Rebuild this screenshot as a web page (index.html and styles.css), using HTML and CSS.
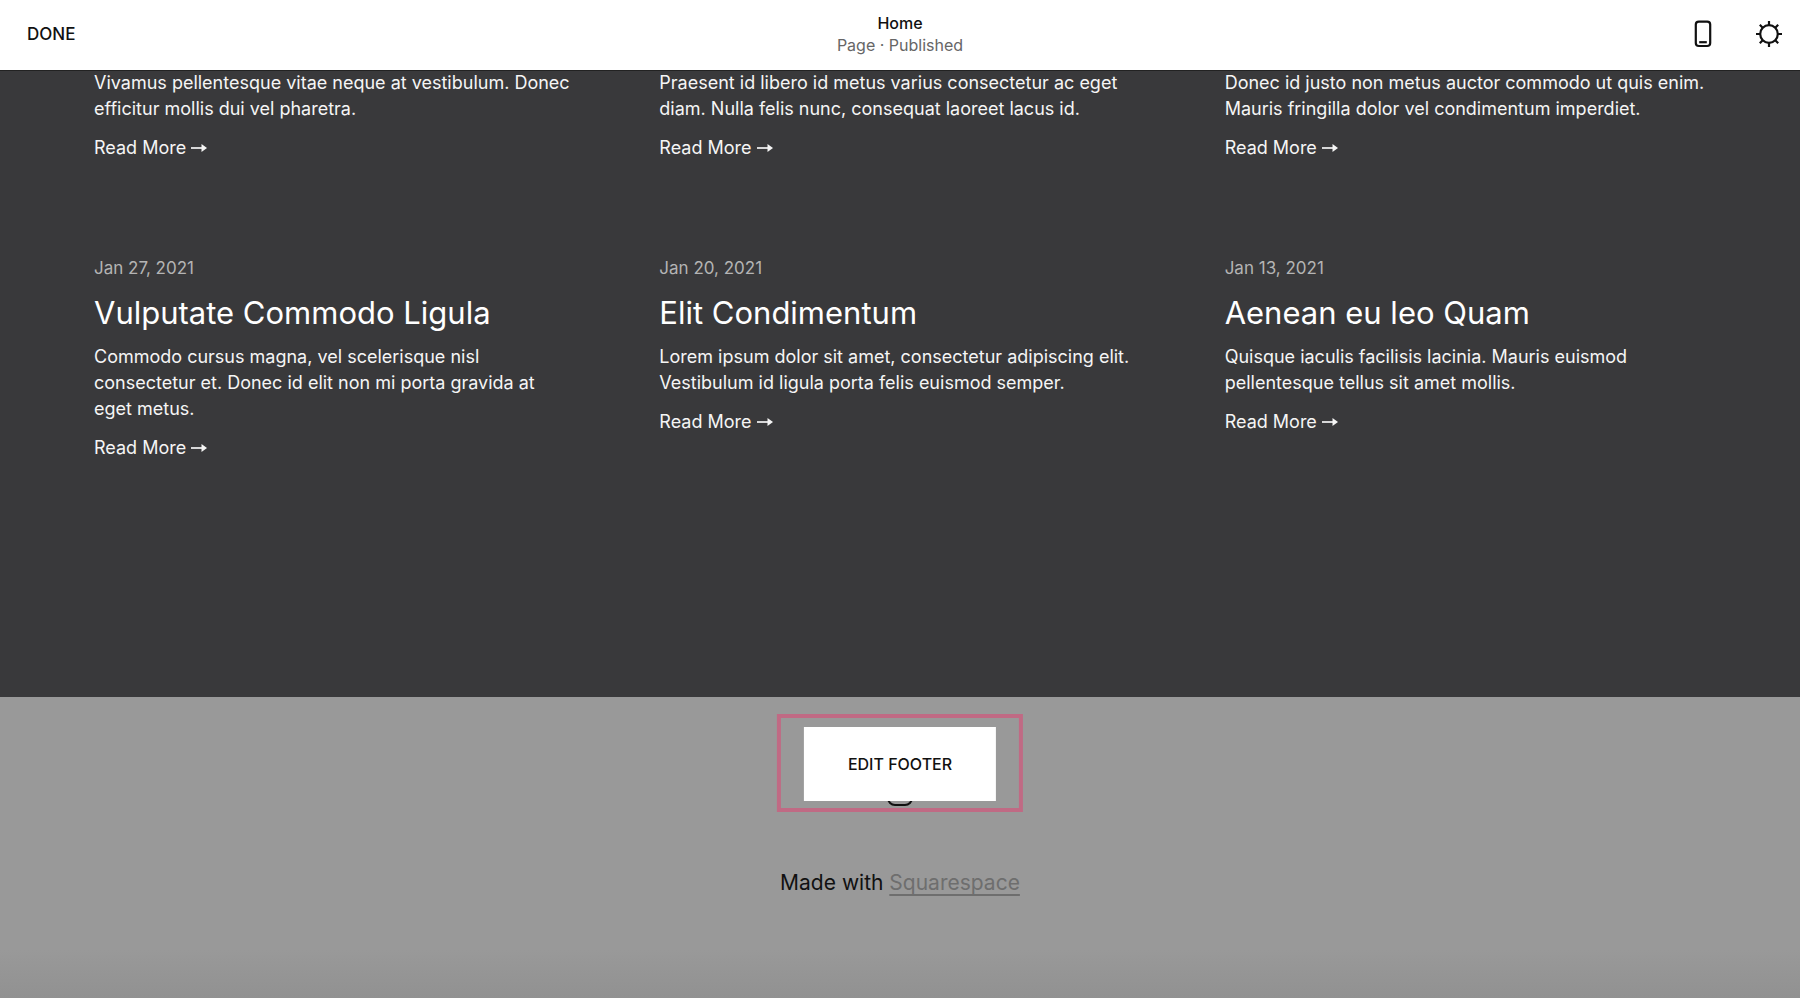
FILE: index.html
```html
<!DOCTYPE html>
<html lang="en">

<head>
    <meta charset="UTF-8">
    <meta name="viewport" content="width=device-width, initial-scale=1.0">
    <title>Home - Page Editor</title>
    <link rel="stylesheet" href="styles.css">
</head>

<body>
    <svg width="0" height="0" class="sprite" aria-hidden="true">
        <symbol id="arrow" viewBox="0 0 16 10">
            <path d="M0 5h12" fill="none" stroke="currentColor" stroke-width="1.7" />
            <path d="M10.5 1L16 5l-5.5 4z" fill="currentColor" />
        </symbol>
    </svg>

    <header class="toolbar">
        <button class="done-btn" type="button">DONE</button>
        <div class="page-info">
            <h1 class="page-name">Home</h1>
            <p class="page-status">Page · Published</p>
        </div>
        <div class="tools">
            <button class="icon-btn" type="button" aria-label="Mobile view">
                <svg width="28" height="28" viewBox="0 0 28 28" fill="none" stroke="#111" stroke-width="2.2">
                    <rect x="6.8" y="1.6" width="14.4" height="24.4" rx="3" />
                    <path d="M10.2 22.2h7.6" />
                </svg>
            </button>
            <button class="icon-btn" type="button" aria-label="Site styles">
                <svg width="28" height="28" viewBox="0 0 28 28" fill="none" stroke="#111" stroke-width="2.2">
                    <circle cx="14" cy="14" r="8.8" />
                    <path d="M14 1v4M14 23v4M1 14h4M23 14h4M4.8 4.8l2.9 2.9M20.3 20.3l2.9 2.9M4.8 23.2l2.9-2.9M20.3 7.7l2.9-2.9" />
                </svg>
            </button>
        </div>
    </header>

    <main class="blog">
        <article class="post">
            <p class="excerpt">Vivamus pellentesque vitae neque at vestibulum. Donec efficitur mollis dui vel pharetra.</p>
            <a class="read-more" href="#">Read More <svg class="arrow"><use href="#arrow" /></svg></a>
        </article>
        <article class="post">
            <p class="excerpt">Praesent id libero id metus varius consectetur ac eget diam. Nulla felis nunc, consequat laoreet lacus id.</p>
            <a class="read-more" href="#">Read More <svg class="arrow"><use href="#arrow" /></svg></a>
        </article>
        <article class="post">
            <p class="excerpt">Donec id justo non metus auctor commodo ut quis enim. Mauris fringilla dolor vel condimentum imperdiet.</p>
            <a class="read-more" href="#">Read More <svg class="arrow"><use href="#arrow" /></svg></a>
        </article>
        <article class="post">
            <time class="date" datetime="2021-01-27">Jan 27, 2021</time>
            <h2 class="title">Vulputate Commodo Ligula</h2>
            <p class="excerpt">Commodo cursus magna, vel scelerisque nisl consectetur et. Donec id elit non mi porta gravida at eget metus.</p>
            <a class="read-more" href="#">Read More <svg class="arrow"><use href="#arrow" /></svg></a>
        </article>
        <article class="post">
            <time class="date" datetime="2021-01-20">Jan 20, 2021</time>
            <h2 class="title">Elit Condimentum</h2>
            <p class="excerpt">Lorem ipsum dolor sit amet, consectetur adipiscing elit. Vestibulum id ligula porta felis euismod semper.</p>
            <a class="read-more" href="#">Read More <svg class="arrow"><use href="#arrow" /></svg></a>
        </article>
        <article class="post">
            <time class="date" datetime="2021-01-13">Jan 13, 2021</time>
            <h2 class="title">Aenean eu leo Quam</h2>
            <p class="excerpt">Quisque iaculis facilisis lacinia. Mauris euismod pellentesque tellus sit amet mollis.</p>
            <a class="read-more" href="#">Read More <svg class="arrow"><use href="#arrow" /></svg></a>
        </article>
    </main>

    <footer class="site-footer">
        <svg class="social" width="28" height="28" viewBox="0 0 28 28" fill="none" stroke="#111" stroke-width="2">
            <rect x="2" y="2" width="24" height="25" rx="7" />
            <circle cx="14" cy="14" r="6" />
        </svg>
        <p class="made-with">Made with <a href="#">Squarespace</a></p>
        <div class="edit-overlay">
            <button class="edit-btn" type="button">EDIT FOOTER</button>
        </div>
    </footer>
</body>

</html>
```
FILE: styles.css
```css
* {
    box-sizing: border-box;
    margin: 0;
    padding: 0;
}

body {
    display: flex;
    flex-direction: column;
    min-height: 100vh;
    background-color: #999;
    font-family: Inter, "Liberation Sans", sans-serif;
    color: #111;
}

button {
    border: none;
    background: none;
    font-family: inherit;
    color: inherit;
    cursor: pointer;
}

.sprite {
    display: none;
}

/* top bar */
.toolbar {
    display: grid;
    grid-template-columns: 1fr auto 1fr;
    align-items: center;
    position: relative;
    z-index: 1;
    padding: 12px 17px 14px;
    background-color: #fff;
    border-bottom: 1px solid #222;
}

.done-btn {
    justify-self: start;
    padding: 0 10px;
    font-size: 17px;
    font-weight: 500;
}

.page-info {
    text-align: center;
    font-size: 16px;
    line-height: 22px;
}

.page-name {
    font-size: 16px;
    font-weight: 500;
}

.page-status {
    color: #666;
}

.tools {
    display: flex;
    justify-content: flex-end;
    gap: 38px;
}

.icon-btn svg {
    display: block;
}

/* posts */
.blog {
    display: grid;
    grid-template-columns: repeat(3, 1fr);
    gap: 95px 84px;
    margin-top: -1px;
    padding: 0 94px 236px;
    background-color: #39393b;
    color: #f5f5f5;
}

.post {
    font-size: 18px;
    line-height: 26px;
}

.date {
    display: block;
    margin-bottom: 12px;
    font-size: 17px;
    line-height: 24px;
    color: #b4b4b4;
}

.title {
    margin-bottom: 10px;
    font-size: 31px;
    font-weight: 400;
    line-height: 42px;
    color: #fff;
}

.excerpt {
    margin-bottom: 13px;
}

.read-more {
    display: block;
    color: inherit;
    text-decoration: none;
}

.arrow {
    width: 16px;
    height: 10px;
    vertical-align: 1px;
}

/* footer */
.site-footer {
    display: flex;
    flex: 1;
    flex-direction: column;
    align-items: center;
    gap: 61px;
    position: relative;
    padding: 81px 20px 98px;
    background: linear-gradient(to top, #919191, #999 48px);
}

.made-with {
    font-size: 21px;
    line-height: 32px;
}

.made-with a {
    color: #6e6e6e;
    text-decoration-thickness: 2px;
    text-underline-offset: 4px;
    text-decoration-skip-ink: none;
}

.edit-overlay {
    position: absolute;
    top: 17px;
    left: 50%;
    transform: translateX(-50%);
    padding: 9px 23px 7px;
    border: 4px solid #c06a84;
}

.edit-btn {
    display: block;
    padding: 26px 44px;
    background-color: #fff;
    font-size: 16px;
    font-weight: 500;
    line-height: 22px;
    white-space: nowrap;
}
```
